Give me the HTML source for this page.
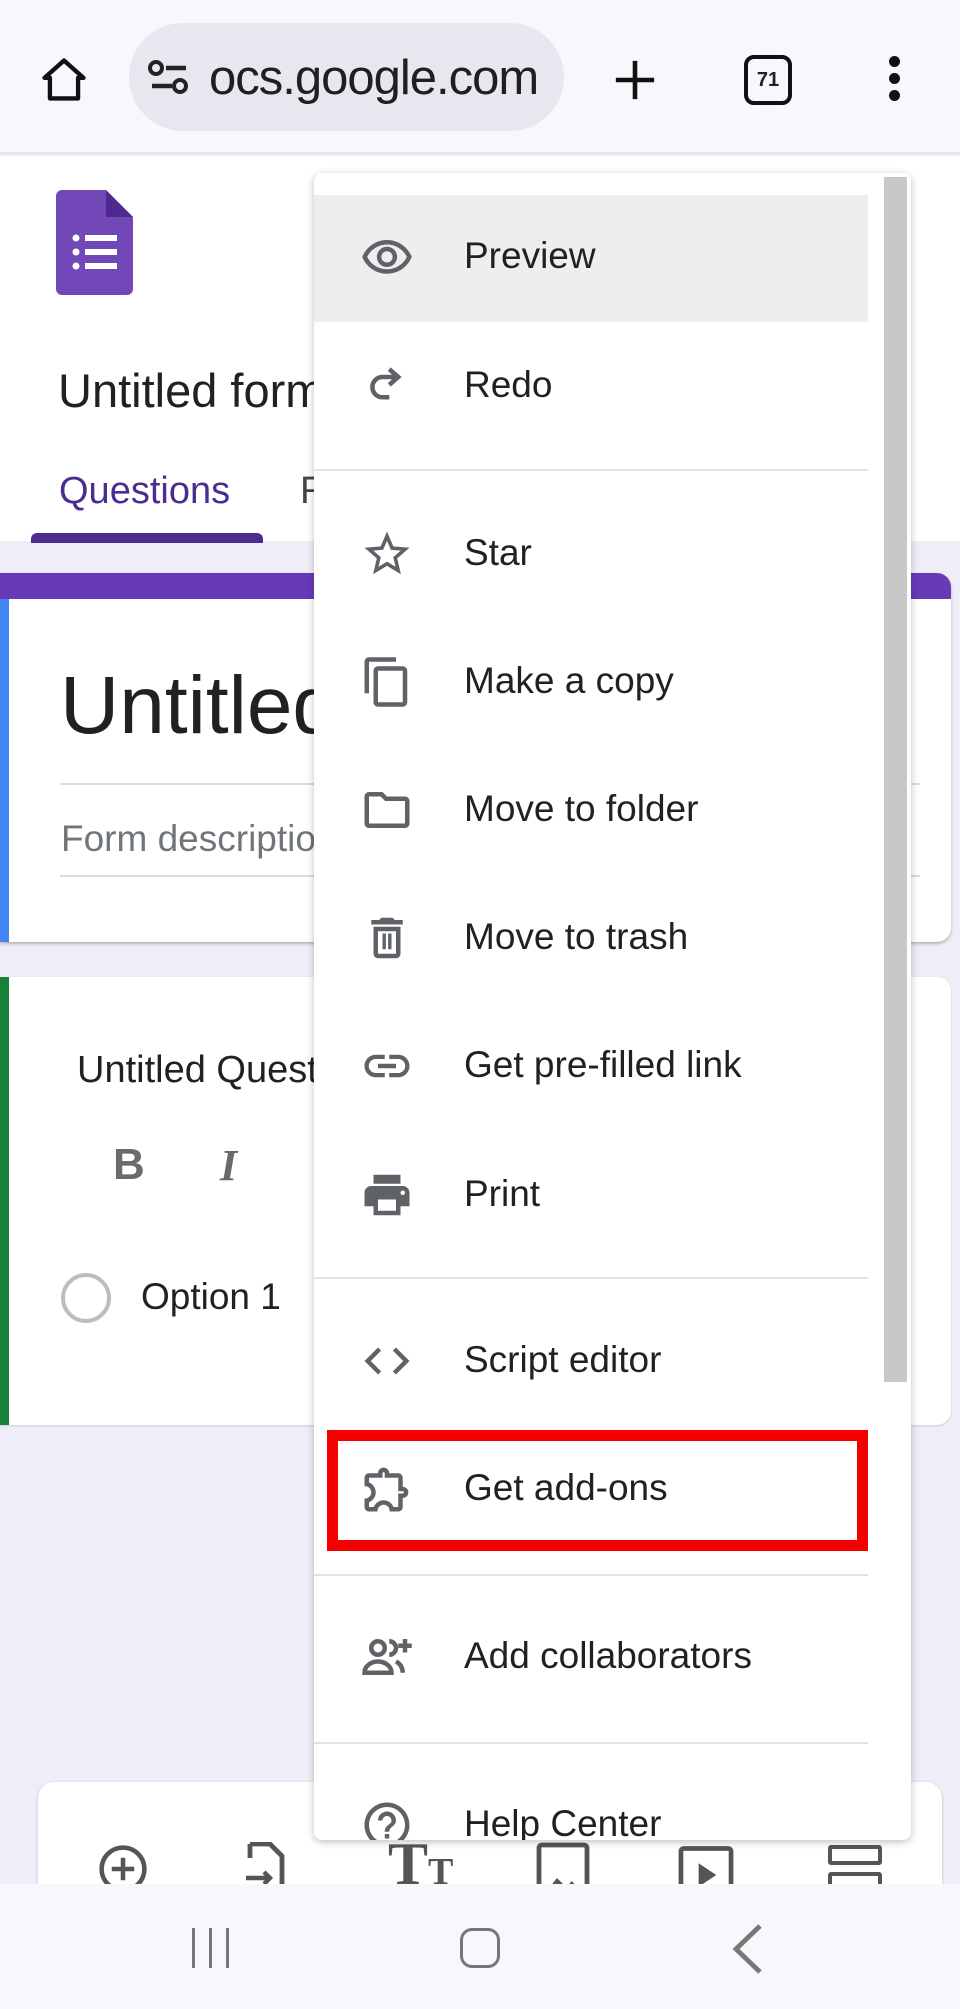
<!DOCTYPE html>
<html><head><meta charset="utf-8"><style>
*{margin:0;padding:0;box-sizing:border-box}
body{width:960px;height:2009px;position:relative;overflow:hidden;background:#efedf7;font-family:"Liberation Sans",Roboto,sans-serif;color:#202124}
.a{position:absolute}
.mi{position:absolute;left:464px;font-size:37px;color:#202124;line-height:40px}
.ic{position:absolute;left:360px;width:54px;height:54px}
.dv{position:absolute;left:314px;width:554px;height:2px;background:#e2e2e2}
</style></head><body>
<!-- top bar -->
<div class="a" style="left:0;top:0;width:960px;height:154px;background:#f8f8fc;border-bottom:2px solid #e4e4ea"></div>
<svg class="a" style="left:38px;top:54px" width="52" height="52" viewBox="0 0 24 24"><path d="M12 3L3 11h2.5v9.5h13V11H21z" fill="none" stroke="#111" stroke-width="2" stroke-linejoin="round"/></svg>
<div class="a" style="left:129px;top:23px;width:435px;height:108px;border-radius:54px;background:#e6e7ef;overflow:hidden">
<svg class="a" style="left:19px;top:35px" width="44" height="40" viewBox="0 0 22 20"><circle cx="4" cy="5" r="3" fill="none" stroke="#222" stroke-width="2"/><path d="M9 5h10M2 14h10" stroke="#222" stroke-width="2.2"/><circle cx="16" cy="14" r="3" fill="none" stroke="#222" stroke-width="2"/></svg>
<div class="a" style="left:80px;top:27px;font-size:49px;color:#1f1f1f;letter-spacing:-1px;white-space:nowrap">ocs.google.com</div>
</div>
<svg class="a" style="left:612px;top:57px" width="46" height="46" viewBox="0 0 24 24"><path d="M12 2v20M2 12h20" stroke="#111" stroke-width="2.4"/></svg>
<div class="a" style="left:744px;top:55px;width:48px;height:50px;border:4px solid #111;border-radius:10px;font-size:20px;text-align:center;line-height:42px;font-weight:bold">71</div>
<div class="a" style="left:889px;top:56px;width:11px;height:11px;border-radius:50%;background:#111;box-shadow:0 17px 0 #111,0 34px 0 #111"></div>
<!-- header -->
<div class="a" style="left:0;top:156px;width:960px;height:385px;background:#fff"></div>
<svg class="a" style="left:56px;top:190px" width="77" height="105" viewBox="0 0 77 105"><path d="M6 0h44l27 27v72a6 6 0 0 1-6 6H6a6 6 0 0 1-6-6V6a6 6 0 0 1 6-6z" fill="#7248b9"/><path d="M50 0l27 27H50z" fill="#4e2a8e"/><circle cx="20" cy="48" r="3.5" fill="#fff"/><circle cx="20" cy="62" r="3.5" fill="#fff"/><circle cx="20" cy="76" r="3.5" fill="#fff"/><rect x="29" y="45" width="32" height="6" fill="#fff"/><rect x="29" y="59" width="32" height="6" fill="#fff"/><rect x="29" y="73" width="32" height="6" fill="#fff"/></svg>
<div class="a" style="left:58px;top:363px;font-size:47px;color:#202124">Untitled form</div>
<div class="a" style="left:59px;top:470px;font-size:38px;color:#4b2d91">Questions</div>
<div class="a" style="left:300px;top:470px;font-size:38px;color:#444">R</div>
<div class="a" style="left:31px;top:533px;width:232px;height:10px;background:#4b2d91;border-radius:6px 6px 0 0"></div>
<!-- card1 -->
<div class="a" style="left:0;top:573px;width:951px;height:369px;background:#fff;border-radius:0 14px 14px 0;box-shadow:0 2px 3px rgba(0,0,0,.25);overflow:hidden">
<div class="a" style="left:0;top:0;width:951px;height:26px;background:#673ab7"></div>
<div class="a" style="left:0;top:26px;width:9px;height:343px;background:#4285f4"></div>
<div class="a" style="left:60px;top:86px;font-size:82px;color:#202124">Untitled form</div>
<div class="a" style="left:60px;top:210px;width:860px;height:2px;background:#dadce0"></div>
<div class="a" style="left:61px;top:245px;font-size:37px;color:#70757a">Form description</div>
<div class="a" style="left:60px;top:302px;width:860px;height:2px;background:#dadce0"></div>
</div>
<!-- card2 -->
<div class="a" style="left:0;top:977px;width:951px;height:448px;background:#fff;border-radius:0 14px 14px 0;box-shadow:0 1px 2px rgba(0,0,0,.15);overflow:hidden">
<div class="a" style="left:0;top:0;width:9px;height:448px;background:#188038"></div>
<div class="a" style="left:77px;top:72px;font-size:38px;color:#202124">Untitled Question</div>
<div class="a" style="left:113px;top:163px;font-size:44px;font-weight:bold;color:#6b6b6b">B</div>
<div class="a" style="left:220px;top:163px;font-size:44px;font-weight:bold;font-style:italic;color:#6b6b6b;font-family:'Liberation Serif',serif">I</div>
<div class="a" style="left:61px;top:296px;width:50px;height:50px;border:4px solid #bdbdbd;border-radius:50%"></div>
<div class="a" style="left:141px;top:299px;font-size:37px;color:#202124">Option 1</div>
</div>
<!-- bottom toolbar -->
<div class="a" style="left:38px;top:1782px;width:904px;height:130px;background:#fff;border-radius:16px;box-shadow:0 1px 3px rgba(0,0,0,.2)"></div>
<svg class="a" style="left:96px;top:1842px" width="54" height="54" viewBox="0 0 24 24"><circle cx="12" cy="12" r="9.5" fill="none" stroke="#555" stroke-width="2"/><path d="M12 7v10M7 12h10" stroke="#555" stroke-width="2"/></svg>
<svg class="a" style="left:246px;top:1842px" width="40" height="50" viewBox="0 0 20 25"><path d="M2 1h10l6 6v18M2 1v7" fill="none" stroke="#555" stroke-width="2.4"/><path d="M0 18h12M9 15l3 3-3 3" fill="none" stroke="#555" stroke-width="2.2"/></svg>
<div class="a" style="left:388px;top:1830px;font-size:60px;font-weight:bold;color:#555;font-family:'Liberation Serif',serif">T<span style="font-size:38px">T</span></div>
<svg class="a" style="left:536px;top:1842px" width="54" height="60" viewBox="0 0 18 20"><rect x="1" y="1" width="16" height="22" rx="1" fill="none" stroke="#555" stroke-width="1.6"/><path d="M3 17l4-5 3 3 2-2 3 4z" fill="#555"/></svg>
<svg class="a" style="left:678px;top:1845px" width="56" height="60" viewBox="0 0 19 20"><rect x="1" y="1" width="17" height="22" rx="1" fill="none" stroke="#555" stroke-width="1.6"/><path d="M7 6l6 4-6 4z" fill="#555"/></svg>
<div class="a" style="left:828px;top:1845px;width:54px;height:20px;border:4px solid #555;border-radius:3px"></div>
<div class="a" style="left:828px;top:1872px;width:54px;height:20px;border:4px solid #555;border-radius:3px"></div>
<!-- nav -->
<div class="a" style="left:0;top:1884px;width:960px;height:125px;background:#f8f8fc"></div>
<div class="a" style="left:192px;top:1928px;width:3px;height:40px;background:#777;box-shadow:17px 0 0 #777,34px 0 0 #777"></div>
<div class="a" style="left:460px;top:1928px;width:40px;height:40px;border:3px solid #777;border-radius:12px"></div>
<svg class="a" style="left:730px;top:1922px" width="36" height="54" viewBox="0 0 18 27"><path d="M15 2L3 13.5 15 25" fill="none" stroke="#777" stroke-width="2.4"/></svg>
<!-- menu -->
<div class="a" style="left:314px;top:173px;width:597px;height:1667px;background:#fff;border-radius:8px;box-shadow:0 2px 8px rgba(0,0,0,.25);overflow:hidden">
<div class="a" style="left:570px;top:4px;width:23px;height:1205px;background:#c8c8c8"></div>
</div>
<div class="a" style="left:314px;top:195px;width:554px;height:127px;background:#eeeeee"></div>
<svg class="ic" style="top:231px" viewBox="0 0 24 24"><path fill="#5f6368" d="M12 6c3.790 0 7.17 2.13 8.82 5.5C19.17 14.87 15.79 17 12 17s-7.17-2.13-8.82-5.5C4.83 8.13 8.21 6 12 6m0-2C7 4 2.73 7.11 1 11.5 2.73 15.89 7 19 12 19s9.27-3.11 11-7.5C21.27 7.11 17 4 12 4zm0 5c1.38 0 2.5 1.12 2.5 2.5S13.38 14 12 14s-2.5-1.12-2.5-2.5S10.62 9 12 9m0-2c-2.48 0-4.5 2.02-4.5 4.5S9.52 16 12 16s4.5-2.02 4.5-4.5S14.48 7 12 7z"/></svg>
<div class="mi" style="top:236px">Preview</div>
<svg class="ic" style="top:359px" viewBox="0 0 24 24"><path d="M13 4.5l4 3.5-4 3.5M17 8H10a4.5 4.5 0 0 0 0 9h3" fill="none" stroke="#5f6368" stroke-width="2"/></svg>
<div class="mi" style="top:365px">Redo</div>
<div class="dv" style="top:469px"></div>
<svg class="ic" style="top:527px" viewBox="0 0 24 24"><path fill="#5f6368" d="M22 9.24l-7.19-.62L12 2 9.19 8.63 2 9.24l5.46 4.73L5.82 21 12 17.27 18.18 21l-1.63-7.03L22 9.24zM12 15.4l-3.76 2.27 1-4.28-3.32-2.88 4.38-.38L12 6.1l1.71 4.04 4.38.38-3.32 2.88 1 4.28L12 15.4z"/></svg>
<div class="mi" style="top:533px">Star</div>
<svg class="ic" style="top:655px" viewBox="0 0 24 24"><path fill="#5f6368" d="M16 1H4c-1.1 0-2 .9-2 2v14h2V3h12V1zm3 4H8c-1.1 0-2 .9-2 2v14c0 1.1.9 2 2 2h11c1.1 0 2-.9 2-2V7c0-1.1-.9-2-2-2zm0 16H8V7h11v14z"/></svg>
<div class="mi" style="top:661px">Make a copy</div>
<svg class="ic" style="top:783px" viewBox="0 0 24 24"><path fill="#5f6368" d="M9.17 6l2 2H20v10H4V6h5.17M10 4H4c-1.1 0-1.99.9-1.99 2L2 18c0 1.1.9 2 2 2h16c1.1 0 2-.9 2-2V8c0-1.1-.9-2-2-2h-8l-2-2z"/></svg>
<div class="mi" style="top:789px">Move to folder</div>
<svg class="ic" style="top:911px" viewBox="0 0 24 24"><path fill="#5f6368" d="M16 9v10H8V9h8m-1.5-6h-5l-1 1H5v2h14V4h-3.5l-1-1zM18 7H6v12c0 1.1.9 2 2 2h8c1.1 0 2-.9 2-2V7zM10 10h1.5v7H10zM12.5 10H14v7h-1.5z"/></svg>
<div class="mi" style="top:917px">Move to trash</div>
<svg class="ic" style="top:1039px" viewBox="0 0 24 24"><path fill="#5f6368" d="M3.9 12c0-1.71 1.39-3.1 3.1-3.1h4V7H7c-2.76 0-5 2.24-5 5s2.24 5 5 5h4v-1.9H7c-1.71 0-3.1-1.39-3.1-3.1zM8 13h8v-2H8v2zm9-6h-4v1.9h4c1.71 0 3.1 1.39 3.1 3.1s-1.39 3.1-3.1 3.1h-4V17h4c2.76 0 5-2.24 5-5s-2.24-5-5-5z"/></svg>
<div class="mi" style="top:1045px">Get pre-filled link</div>
<svg class="ic" style="top:1168px" viewBox="0 0 24 24"><path fill="#5f6368" d="M19 8H5c-1.66 0-3 1.34-3 3v6h4v4h12v-4h4v-6c0-1.66-1.34-3-3-3zm-3 11H8v-5h8v5zm3-7c-.55 0-1-.45-1-1s.45-1 1-1 1 .45 1 1-.45 1-1 1zm-1-9H6v4h12V3z"/></svg>
<div class="mi" style="top:1174px">Print</div>
<div class="dv" style="top:1277px"></div>
<svg class="ic" style="top:1334px" viewBox="0 0 24 24"><path fill="#5f6368" d="M9.4 16.6L4.8 12l4.6-4.6L8 6l-6 6 6 6 1.4-1.4zm5.2 0l4.6-4.6-4.6-4.6L16 6l6 6-6 6-1.4-1.4z"/></svg>
<div class="mi" style="top:1340px">Script editor</div>
<div class="a" style="left:327px;top:1430px;width:541px;height:121px;border:11px solid #f40000"></div>
<svg class="ic" style="top:1462px" viewBox="0 0 24 24"><path fill="#5f6368" d="M10.5 4.5c.28 0 .5.22.5.5v2h6v6h2c.28 0 .5.22.5.5s-.22.5-.5.5h-2v6h-2.12c-.68-1.75-2.39-3-4.38-3s-3.7 1.25-4.38 3H4v-2.12c1.75-.68 3-2.39 3-4.38 0-1.99-1.24-3.7-2.99-4.38L4 7h6V5c0-.28.22-.5.5-.5m0-2C9.12 2.5 8 3.62 8 5H4c-1.1 0-1.99.9-1.99 2v3.8h.29c1.49 0 2.7 1.21 2.7 2.7s-1.21 2.7-2.7 2.7H2V20c0 1.1.9 2 2 2h3.8v-.3c0-1.49 1.21-2.7 2.7-2.7s2.7 1.21 2.7 2.7v.3H17c1.1 0 2-.9 2-2v-4c1.38 0 2.5-1.12 2.5-2.5S20.38 11 19 11V7c0-1.1-.9-2-2-2h-4c0-1.38-1.12-2.5-2.5-2.5z"/></svg>
<div class="mi" style="top:1468px">Get add-ons</div>
<div class="dv" style="top:1574px"></div>
<svg class="ic" style="top:1630px" viewBox="0 0 24 24"><circle cx="8" cy="8" r="3" fill="none" stroke="#5f6368" stroke-width="2"/><path d="M2 19c0-3 3-5 6-5s6 2 6 5z" fill="none" stroke="#5f6368" stroke-width="2"/><path d="M13 5a3 3 0 0 1 0 6M16 14c2 1 3 3 3 5" fill="none" stroke="#5f6368" stroke-width="2"/><path d="M20 4v6M17 7h6" stroke="#5f6368" stroke-width="2"/></svg>
<div class="mi" style="top:1636px">Add collaborators</div>
<div class="dv" style="top:1742px"></div>
<div class="a" style="left:314px;top:1744px;width:597px;height:96px;overflow:hidden">
<svg class="a" style="left:46px;top:54px;width:54px;height:54px" viewBox="0 0 24 24"><path fill="#5f6368" d="M11 18h2v-2h-2v2zm1-16C6.48 2 2 6.48 2 12s4.48 10 10 10 10-4.48 10-10S17.52 2 12 2zm0 18c-4.41 0-8-3.59-8-8s3.59-8 8-8 8 3.59 8 8-3.59 8-8 8zm0-14c-2.21 0-4 1.79-4 4h2c0-1.1.9-2 2-2s2 .9 2 2c0 2-3 1.75-3 5h2c0-2.25 3-2.5 3-5 0-2.210-1.79-4-4-4z"/></svg>
<div class="a" style="left:150px;top:60px;font-size:37px;color:#202124;line-height:40px">Help Center</div>
</div>
</body></html>
